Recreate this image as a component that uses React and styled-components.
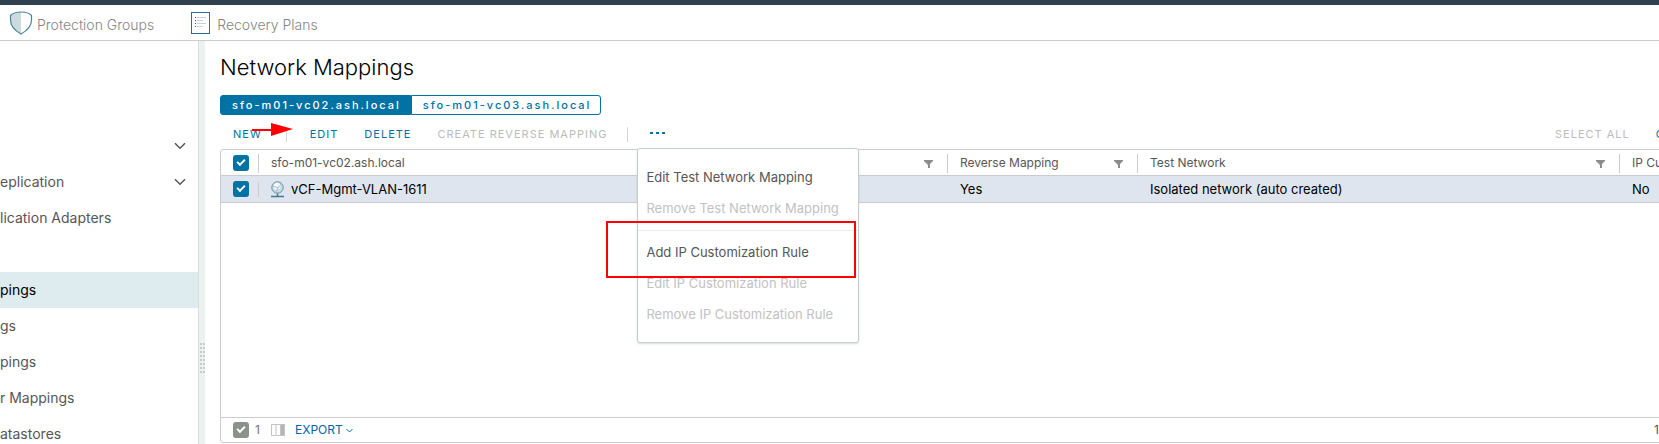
import React from "react";
import styled, { createGlobalStyle } from "styled-components";

const GlobalStyle = createGlobalStyle`
  *, *::before, *::after { box-sizing: border-box; }
  body {
    margin: 0;
    background: #ffffff;
    color: #000000;
    font-family: Inter, "Liberation Sans", sans-serif;
    font-size: 14px;
    font-weight: 400;
  }
  button { font-family: inherit; }
`;

const Page = styled.div`
  display: flex;
  flex-direction: column;
  height: 100vh;
  overflow: hidden;
  border-top: 5px solid #304250;
`;

const TopNav = styled.nav`
  display: flex;
  flex: none;
  gap: 37px;
  height: 36px;
  padding-left: 9px;
  border-bottom: 1px solid #cccccc;
`;

const NavLink = styled.a`
  display: flex;
  align-items: center;
  gap: ${(p) => p.$gap}px;
  color: #858585;
  font-size: 14px;
  font-weight: 300;
  line-height: 20px;
  text-decoration: none;
`;

const NavText = styled.span`
  padding-top: 4px;
`;

const Body = styled.div`
  display: flex;
  flex: 1;
  min-height: 0;
`;

const Sidebar = styled.aside`
  flex: none;
  width: 198px;
  padding-top: 87px;
  overflow: hidden;
`;

const SideItem = styled.a`
  display: flex;
  align-items: center;
  justify-content: space-between;
  height: 36px;
  padding-right: 12px;
  background: ${(p) => (p.$active ? "#deebef" : "transparent")};
  color: ${(p) => (p.$active ? "#000000" : "#565656")};
  font-size: 14px;
  line-height: 20px;
  text-decoration: none;
  white-space: nowrap;
`;

const Splitter = styled.div`
  display: flex;
  flex: none;
  align-items: flex-start;
  width: 7px;
  padding-top: 302px;
  padding-left: 1px;
  border-left: 1px solid #d8e0dc;
  background: #ecf2ef;
`;

const Main = styled.main`
  display: flex;
  flex: 1;
  flex-direction: column;
  min-width: 0;
  padding: 12px 0 1px 15px;
  overflow: hidden;
`;

const Title = styled.h1`
  margin: 0;
  font-size: 22px;
  font-weight: 300;
  line-height: 28px;
`;

const Tabs = styled.div`
  display: flex;
  flex: none;
  margin-top: 14px;
`;

const Tab = styled.button`
  height: 20px;
  padding: 0 9px 0 11px;
  border: 1px solid #0072a3;
  border-radius: ${(p) => (p.$active ? "3px 0 0 3px" : "0 3px 3px 0")};
  background: ${(p) => (p.$active ? "#0072a3" : "#ffffff")};
  color: ${(p) => (p.$active ? "#ffffff" : "#0072a3")};
  font-size: 11px;
  font-weight: 500;
  line-height: 18px;
  letter-spacing: 2px;
`;

const Toolbar = styled.div`
  position: relative;
  display: flex;
  flex: none;
  align-items: center;
  width: calc(100% + 120px);
  height: 34px;
  padding: 4px 0 0 13px;
`;

const Action = styled.button`
  padding: 0;
  margin-right: ${(p) => p.$space || 26}px;
  border: 0;
  background: none;
  color: #0072a3;
  font-size: 11px;
  font-weight: 400;
  line-height: 16px;
  letter-spacing: 1px;
  text-transform: uppercase;
  white-space: nowrap;
  &:disabled { color: #bcbcbc; }
`;

const Rule = styled.span`
  width: 1px;
  height: 15px;
  margin-right: ${(p) => p.$space}px;
  background: #d8d8d8;
`;

const Selection = styled.div`
  display: flex;
  width: 224px;
  margin-left: auto;
`;

const More = styled.div`
  position: relative;
  height: 16px;
`;

const MoreButton = styled.button`
  display: block;
  padding: 0;
  border: 0;
  background: none;
  svg { display: block; }
`;

const Menu = styled.div`
  position: absolute;
  z-index: 2;
  top: 22px;
  left: -12px;
  width: 222px;
  padding: 13px 0 12px;
  border: 1px solid #c6cdcd;
  border-radius: 3px;
  background: #ffffff;
  box-shadow: 0 1px 2px rgba(120, 120, 120, 0.25);
`;

const MenuItem = styled.button`
  display: block;
  width: 100%;
  height: 31px;
  padding: 0 8px;
  border: 0;
  background: none;
  color: #565656;
  font-size: 13px;
  line-height: 31px;
  text-align: left;
  white-space: nowrap;
  &:disabled { color: #c2c2c2; }
`;

const MenuDivider = styled.hr`
  height: 1px;
  margin: 6px 0;
  border: 0;
  background: #ececec;
`;

const Highlight = styled.div`
  position: absolute;
  top: 72px;
  left: -32px;
  width: 250px;
  height: 57px;
  border: 2px solid #ff0000;
  pointer-events: none;
`;

const Arrow = styled.svg`
  position: absolute;
  top: 7px;
  left: 32px;
`;

const Grid = styled.section`
  display: flex;
  flex: 1;
  flex-direction: column;
  width: calc(100% + 120px);
  min-height: 0;
  border: 1px solid #cccccc;
  border-radius: 3px;
`;

const Table = styled.table`
  width: 100%;
  table-layout: fixed;
  border-spacing: 0;
`;

const Col = styled.col`
  width: ${(p) => (p.$w ? `${p.$w}px` : "auto")};
`;

const HeadCell = styled.th`
  height: 26px;
  padding: 1px 0 0;
  border-bottom: 1px solid #cccccc;
  color: #565656;
  font-size: 12px;
  font-weight: 400;
  text-align: left;
`;

const DataCell = styled.td`
  height: 27px;
  padding: 0;
  border-bottom: 1px solid #cccccc;
  background: #dee5ef;
  font-size: 13px;
  text-align: left;
`;

const CellContent = styled.div`
  display: flex;
  align-items: center;
  height: ${(p) => (p.$head ? 19 : 15)}px;
  padding: 0 14px 0 12px;
  border-left: 1px solid ${(p) => (p.$line ? "#cccccc" : "transparent")};
  line-height: 18px;
  white-space: nowrap;
`;

const Filter = styled.button`
  margin-left: auto;
  padding: 2px 0 0;
  border: 0;
  background: none;
  svg { display: block; }
`;

const NetworkIcon = styled.svg`
  flex: none;
  margin-right: 7px;
`;

const Check = styled.input`
  display: block;
  flex: none;
  width: 16px;
  height: 16px;
  margin: 0 0 0 ${(p) => (p.$inset ? 12 : 0)}px;
  appearance: none;
  border-radius: 3px;
  background-color: ${(p) => (p.$muted ? "#8c918e" : "#0072a3")};
  display: grid;
  place-items: center;
  &:checked::before {
    content: "";
    width: 8px;
    height: 5px;
    margin-bottom: 3px;
    border-left: 2px solid #ffffff;
    border-bottom: 2px solid #ffffff;
    transform: rotate(-45deg);
  }
`;

const Footer = styled.footer`
  display: flex;
  flex: none;
  align-items: center;
  height: 25px;
  margin-top: auto;
  padding: 0 0 0 12px;
  border-top: 1px solid #cccccc;
  color: #565656;
  font-size: 12px;
  line-height: 16px;
`;

const Count = styled.label`
  display: flex;
  align-items: center;
  gap: 6px;
  width: 38px;
  color: #757575;
`;

const PlainButton = styled.button`
  display: flex;
  align-items: center;
  gap: 3px;
  margin-right: 10px;
  padding: 0;
  border: 0;
  background: none;
  color: #0065ab;
  font-size: 12px;
  line-height: 16px;
`;

const Range = styled.span`
  width: 124px;
  margin-left: auto;
  white-space: nowrap;
`;

const Chevron = () => (
  <svg width="12" height="8" viewBox="0 0 12 8" fill="none" stroke="#565656" strokeWidth="1.5" aria-hidden="true">
    <path d="M1 1.3 6 6.2 11 1.3" />
  </svg>
);

const FilterButton = ({ name }) => (
  <Filter aria-label={`Filter ${name}`}>
    <svg width="9" height="8" viewBox="0 0 9 8" fill="#8c8c8c">
      <path d="M0 0h9v1L6 4v4H4V5L0 1z" />
    </svg>
  </Filter>
);

const menuGroups = [
  [
    ["Edit Test Network Mapping", false],
    ["Remove Test Network Mapping", true],
  ],
  [
    ["Add IP Customization Rule", false],
    ["Edit IP Customization Rule", true],
    ["Remove IP Customization Rule", true],
  ],
];

const sideItems = [
  { label: "", open: true },
  { label: "eplication", open: true },
  { label: "lication Adapters" },
  { label: "" },
  { label: "pings", active: true },
  { label: "gs" },
  { label: "pings" },
  { label: "r Mappings" },
  { label: "atastores" },
];

export default function App() {
  return (
    <Page>
      <GlobalStyle />
      <TopNav>
        <NavLink href="#groups" $gap={4}>
          <svg width="24" height="24" viewBox="0 0 24 24" aria-hidden="true">
            <path d="M12 1C8 1 4 2 1.5 4.5V9c0 6 5 11 10.5 14z" fill="#cbdcdf" />
            <path d="M12 1C8 1 4 2 1.5 4.5V9c0 6 5 11 10.5 14 5.500-3 10.500-8 10.500-14V4.500C20 2 16 1 12 1z" fill="none" stroke="#47839c" strokeWidth="1.2" />
          </svg>
          <NavText>Protection Groups</NavText>
        </NavLink>
        <NavLink href="#plans" $gap={7}>
          <svg width="19" height="22" viewBox="0 0 19 22" aria-hidden="true">
            <rect x=".5" y=".5" width="18" height="21" fill="#fff" stroke="#2a7096" />
            <path d="M6 5.500h9M6 8.500h6M6 11.500h9M6 14.500h6" stroke="#c3d4d8" />
            <path d="M4 5.500h1M4 8.500h1M4 11.500h1M4 14.500h1" stroke="#2a7096" />
          </svg>
          <NavText>Recovery Plans</NavText>
        </NavLink>
      </TopNav>
      <Body>
        <Sidebar>
          {sideItems.map((item, i) => (
            <SideItem key={i} href="#section" $active={item.active}>
              <span>{item.label}</span>
              {item.open && <Chevron />}
            </SideItem>
          ))}
        </Sidebar>
        <Splitter>
          <svg width="5" height="30" viewBox="0 0 5 30" aria-hidden="true">
            <path d="M1 0v30M4 0v30" stroke="#c8cdca" strokeWidth="2" strokeDasharray="2 2" />
          </svg>
        </Splitter>
        <Main>
          <Title>Network Mappings</Title>
          <Tabs>
            <Tab $active>sfo-m01-vc02.ash.local</Tab>
            <Tab>sfo-m01-vc03.ash.local</Tab>
          </Tabs>
          <Toolbar>
            <Action $space={24}>New</Action>
            <Rule $space={23} />
            <Action>Edit</Action>
            <Action>Delete</Action>
            <Action disabled $space={20}>Create Reverse Mapping</Action>
            <Rule $space={21} />
            <More>
              <MoreButton aria-label="More actions">
                <svg width="18" height="16" viewBox="0 0 18 16" fill="#0072a3">
                  <path d="M1 6h3v2H1zM7 6h3v2H7zM13 6h3v2h-3z" />
                </svg>
              </MoreButton>
              <Menu>
                {menuGroups.map((group, g) => (
                  <React.Fragment key={g}>
                    {g > 0 && <MenuDivider />}
                    {group.map(([label, disabled]) => (
                      <MenuItem key={label} disabled={disabled}>{label}</MenuItem>
                    ))}
                  </React.Fragment>
                ))}
                <Highlight />
              </Menu>
            </More>
            <Selection>
              <Action disabled>Select All</Action>
              <Action>Clear Selection</Action>
            </Selection>
            <Arrow width="42" height="15" viewBox="0 0 42 15" aria-hidden="true">
              <path d="M0 8h22" stroke="#ff0000" strokeWidth="2" />
              <path d="M19 1v13l22-7z" fill="#ff0000" />
            </Arrow>
          </Toolbar>
          <Grid>
            <Table>
              <colgroup>
                <Col $w={37} />
                <Col />
                <Col $w={190} />
                <Col $w={482} />
                <Col $w={159} />
              </colgroup>
              <thead>
                <tr>
                  <HeadCell><Check type="checkbox" defaultChecked $inset aria-label="Select all rows" /></HeadCell>
                  <HeadCell><CellContent $head $line>sfo-m01-vc02.ash.local<FilterButton name="site" /></CellContent></HeadCell>
                  <HeadCell><CellContent $head $line>Reverse Mapping<FilterButton name="reverse mapping" /></CellContent></HeadCell>
                  <HeadCell><CellContent $head $line>Test Network<FilterButton name="test network" /></CellContent></HeadCell>
                  <HeadCell><CellContent $head $line>IP Customization</CellContent></HeadCell>
                </tr>
              </thead>
              <tbody>
                <tr>
                  <DataCell><Check type="checkbox" defaultChecked $inset aria-label="Select row" /></DataCell>
                  <DataCell>
                    <CellContent $line>
                      <NetworkIcon width="13" height="17" viewBox="0 0 13 17" aria-hidden="true">
                        <circle cx="6.500" cy="6.500" r="5.700" fill="#c9dde5" stroke="#668fa3" />
                        <path d="M3 3l3-1.500 4 2-1 4-4 1.500-2.500-2z" fill="#f6fafb" />
                        <path d="M2 5l5 2 3-4M7 7l-2 4" fill="none" stroke="#a5bdc7" />
                        <path d="M6.500 12.500v3M0 15.500h13" stroke="#47788e" strokeWidth="1.500" />
                      </NetworkIcon>
                      vCF-Mgmt-VLAN-1611
                    </CellContent>
                  </DataCell>
                  <DataCell><CellContent>Yes</CellContent></DataCell>
                  <DataCell><CellContent>Isolated network (auto created)</CellContent></DataCell>
                  <DataCell><CellContent>No</CellContent></DataCell>
                </tr>
              </tbody>
            </Table>
            <Footer>
              <Count><Check type="checkbox" defaultChecked $muted />1</Count>
              <PlainButton aria-label="Show columns">
                <svg width="14" height="12" viewBox="0 0 14 12">
                  <path d="M9 0h5v12H9z" fill="#b5b5b5" />
                  <path d="M.5.500h13v11H.5zM5 0v12M9.500 0v12" fill="none" stroke="#c4c4c4" />
                </svg>
              </PlainButton>
              <PlainButton>
                EXPORT
                <svg width="7" height="5" viewBox="0 0 7 5" fill="none" stroke="#0072a3" aria-hidden="true">
                  <path d="M.5 1l3 3 3-3" />
                </svg>
              </PlainButton>
              <Range>1 - 1 of 1 items</Range>
            </Footer>
          </Grid>
        </Main>
      </Body>
    </Page>
  );
}
